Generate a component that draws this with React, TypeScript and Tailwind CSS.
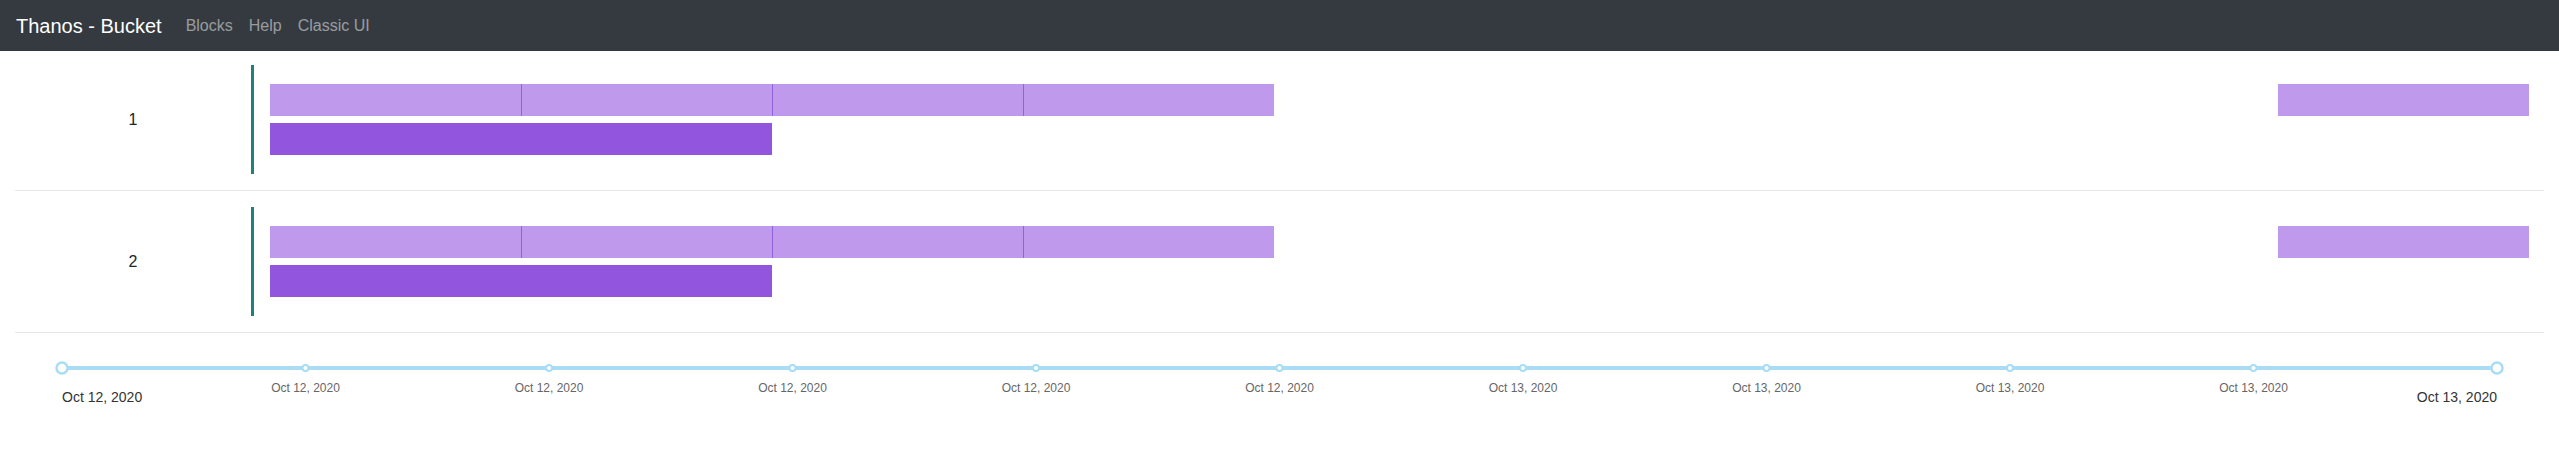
import React from "react";

type Block = { col: number; span: number; divider?: boolean };

const lanes: { light: Block[]; dark: Block[] } = {
  light: [
    { col: 1, span: 1 },
    { col: 2, span: 1, divider: true },
    { col: 3, span: 1, divider: true },
    { col: 4, span: 1, divider: true },
    { col: 9, span: 1 },
  ],
  dark: [{ col: 1, span: 2 }],
};

const colStart: Record<number, string> = {
  1: "col-start-1",
  2: "col-start-2",
  3: "col-start-3",
  4: "col-start-4",
  9: "col-start-9",
};
const colSpan: Record<number, string> = {
  1: "col-span-1",
  2: "col-span-2",
};

const ticks = [
  "Oct 12, 2020",
  "Oct 12, 2020",
  "Oct 12, 2020",
  "Oct 12, 2020",
  "Oct 12, 2020",
  "Oct 13, 2020",
  "Oct 13, 2020",
  "Oct 13, 2020",
  "Oct 13, 2020",
];

function Navbar() {
  return (
    <nav className="flex h-[51px] items-center bg-[#343a40] px-4">
      <span className="mr-4 text-[20px] leading-[30px] text-white">Thanos - Bucket</span>
      {["Blocks", "Help", "Classic UI"].map((l) => (
        <a key={l} className="px-2 text-[16px] leading-6 text-white/50">
          {l}
        </a>
      ))}
    </nav>
  );
}

function Lane({ blocks, color }: { blocks: Block[]; color: string }) {
  return (
    <div className="grid h-8 grid-cols-9">
      {blocks.map((b) => (
        <div
          key={b.col}
          className={`${colStart[b.col]} ${colSpan[b.span]} h-8 ${color} ${
            b.divider ? "border-l border-[#9461dd]" : ""
          }`}
        />
      ))}
    </div>
  );
}

function Row({ label, first }: { label: string; first?: boolean }) {
  return (
    <div className={`flex border-b border-[#e6e6e6] pb-4 ${first ? "pt-[14px]" : "pt-4"}`}>
      <div className="flex w-[236px] items-center justify-center text-[16px] text-[#212529]">
        {label}
      </div>
      <div className="flex h-[109px] flex-1 flex-col justify-center gap-[7px] border-l-[3px] border-[#1f807c] pl-4 pr-[15px]">
        <Lane blocks={lanes.light} color="bg-[#bf99eb]" />
        <Lane blocks={lanes.dark} color="bg-[#9155de]" />
      </div>
    </div>
  );
}

function Timeline() {
  return (
    <div className="relative mx-[62px] h-[110px]">
      <svg className="absolute left-0 top-[28px] h-[14px] w-full overflow-visible">
        <line x1="0" x2="100%" y1="7" y2="7" stroke="#a8ddf5" strokeWidth="4" />
        {ticks.map((_, i) => (
          <circle
            key={i}
            cx={`${(i + 1) * 10}%`}
            cy="7"
            r="3"
            fill="#fff"
            stroke="#a8ddf5"
            strokeWidth="2"
          />
        ))}
        <circle cx="0" cy="7" r="5.5" fill="#fff" stroke="#a8ddf5" strokeWidth="2.5" />
        <circle cx="100%" cy="7" r="5.5" fill="#fff" stroke="#a8ddf5" strokeWidth="2.5" />
      </svg>
      {ticks.map((t, i) => (
        <span
          key={i}
          className="absolute top-[48px] -translate-x-1/2 whitespace-nowrap text-[12px] leading-[14px] text-[#666]"
          style={{ left: `${(i + 1) * 10}%` }}
        >
          {t}
        </span>
      ))}
      <span className="absolute left-0 top-[56px] text-[14px] leading-4 text-[#333]">
        Oct 12, 2020
      </span>
      <span className="absolute right-0 top-[56px] text-[14px] leading-4 text-[#333]">
        Oct 13, 2020
      </span>
    </div>
  );
}

export default function App() {
  return (
    <div className="min-h-[449px] bg-white font-['Liberation_Sans',Arial,sans-serif]">
      <Navbar />
      <div className="px-[15px]">
        <Row label="1" first />
        <Row label="2" />
      </div>
      <Timeline />
    </div>
  );
}
